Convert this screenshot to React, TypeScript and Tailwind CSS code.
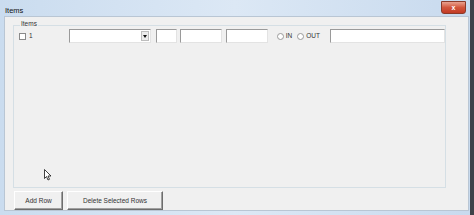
import React from 'react';

const font = { fontFamily: '"Liberation Sans", "DejaVu Sans", sans-serif' };

function TextBox({ w }: { w: number }) {
  return (
    <div
      className="h-[14px] bg-white border border-t-[#9a9a9a] border-l-[#9a9a9a] border-r-[#e3e3e3] border-b-[#e3e3e3]"
      style={{ width: w }}
    />
  );
}

function Radio({ label }: { label: string }) {
  return (
    <div className="flex items-center gap-[2px]">
      <div className="w-[7px] h-[7px] rounded-full border border-[#9a9a9a] bg-white" />
      <span className="text-[6.5px] text-[#333]">{label}</span>
    </div>
  );
}

function Button({ w, label }: { w: number; label: string }) {
  return (
    <div
      className="h-[19px] flex items-center justify-center bg-[#f0f0f0] border border-t-white border-l-white border-r-[#6d6d6d] border-b-[#6d6d6d] shadow-[inset_-1px_-1px_0_#a0a0a0]"
      style={{ width: w }}
    >
      <span className="text-[6.5px] text-[#333]">{label}</span>
    </div>
  );
}

export default function App() {
  return (
    <div className="w-[474px] h-[215px] flex bg-[#4b4f55] overflow-hidden" style={font}>
      {/* window */}
      <div className="w-[470px] h-full flex flex-col bg-gradient-to-r from-[#cadcef] via-[#dce8f5] to-[#c8daee]">
        {/* title bar */}
        <div className="h-[18px] flex items-start justify-between pl-[5px] pr-[4px]">
          <span className="text-[7.5px] text-[#111] mt-[5px]">Items</span>
          <div className="w-[25px] h-[13px] mt-[1px] rounded-b-[3px] bg-gradient-to-b from-[#e8a08e] via-[#d2553c] to-[#c23a24] border border-[#8a3a2a] flex items-center justify-center">
            <span className="text-[7px] text-white font-bold leading-none">x</span>
          </div>
        </div>
        {/* body */}
        <div className="flex-1 px-[4px] pb-[7px] flex">
          <div className="flex-1 bg-[#f0f0f0] border border-[#b9c6d4] flex flex-col pl-[8px] pr-[22px] pt-[4px] relative">
            {/* group box */}
            <div className="relative h-[163px] mt-[4px] border border-[#d5dfe5] flex flex-col">
              <span className="absolute -top-[5px] left-[6px] bg-[#f0f0f0] px-[1px] text-[6.5px] leading-none text-[#333]">
                Items
              </span>
              <div className="flex items-center mt-[3px] pl-[5px]">
                <div className="w-[7px] h-[7px] border border-[#8a8a8a] bg-white" />
                <span className="text-[6.5px] ml-[3px] text-[#333]">1</span>
                <div className="ml-[36px] w-[82px] h-[14px] bg-white border border-t-[#9a9a9a] border-l-[#9a9a9a] border-r-[#e3e3e3] border-b-[#e3e3e3] flex justify-end p-[1px]">
                  <div className="w-[8px] h-full bg-[#ececec] border border-[#bdbdbd] flex items-center justify-center">
                    <svg width="4" height="3" viewBox="0 0 4 3">
                      <path d="M0 0 L4 0 L2 3 Z" fill="#111" />
                    </svg>
                  </div>
                </div>
                <div className="ml-[5px]"><TextBox w={21} /></div>
                <div className="ml-[3px]"><TextBox w={42} /></div>
                <div className="ml-[4px]"><TextBox w={42} /></div>
                <div className="ml-[9px]"><Radio label="IN" /></div>
                <div className="ml-[5px]"><Radio label="OUT" /></div>
                <div className="ml-[10px]"><TextBox w={115} /></div>
              </div>
            </div>
            {/* buttons */}
            <div className="flex gap-[4px] mt-[3px] pl-[1px]">
              <Button w={49} label="Add Row" />
              <Button w={96} label="Delete Selected Rows" />
            </div>
            {/* mouse cursor */}
            <svg className="absolute left-[39px] top-[152px]" width="8" height="12" viewBox="0 0 8 12">
              <path d="M0.5 0.5 L0.5 9.5 L2.5 7.5 L4 11 L5.5 10.3 L4 7 L7 7 Z" fill="#fff" stroke="#111" strokeWidth="0.8" />
            </svg>
          </div>
        </div>
      </div>
      <div className="w-[4px] h-full bg-[#3f4349]" />
    </div>
  );
}
